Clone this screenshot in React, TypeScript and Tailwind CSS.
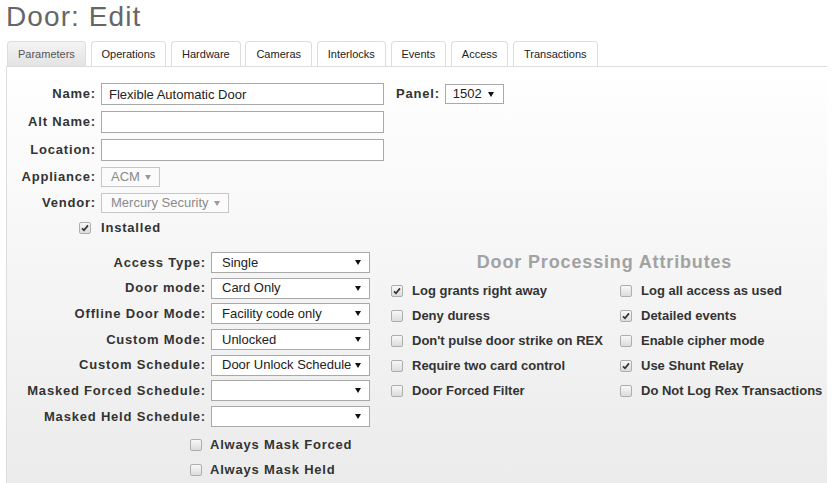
import React from 'react';

const tabs = ['Parameters', 'Operations', 'Hardware', 'Cameras', 'Interlocks', 'Events', 'Access', 'Transactions'];

const scheduleRows: [string, string][] = [
  ['Access Type:', 'Single'],
  ['Door mode:', 'Card Only'],
  ['Offline Door Mode:', 'Facility code only'],
  ['Custom Mode:', 'Unlocked'],
  ['Custom Schedule:', 'Door Unlock Schedule'],
  ['Masked Forced Schedule:', ''],
  ['Masked Held Schedule:', ''],
];

const attributes: [string, boolean][] = [
  ['Log grants right away', true],
  ['Log all access as used', false],
  ['Deny duress', false],
  ['Detailed events', true],
  ["Don't pulse door strike on REX", false],
  ['Enable cipher mode', false],
  ['Require two card control', false],
  ['Use Shunt Relay', true],
  ['Door Forced Filter', false],
  ['Do Not Log Rex Transactions', false],
];

const labelCls = 'text-[13px] font-bold tracking-[0.8px] text-[#333] whitespace-nowrap';

function Arrow({ muted }: { muted?: boolean }) {
  return (
    <svg width="6" height="5" viewBox="0 0 6 5" className="shrink-0">
      <path d="M0 0H6L3 5Z" fill={muted ? '#9a9a9a' : '#111'} />
    </svg>
  );
}

function Check({ on }: { on?: boolean }) {
  return (
    <span className="flex h-[12px] w-[12px] shrink-0 items-center justify-center rounded-[2px] border border-[#aeaeae] bg-linear-to-b from-[#f8f8f8] to-[#dcdcdc]">
      {on && (
        <svg width="8" height="8" viewBox="0 0 8 8">
          <path d="M1 4.3 3 6.3 7 1.4" fill="none" stroke="#333" strokeWidth="1.7" />
        </svg>
      )}
    </span>
  );
}

function TextField({ value = '' }: { value?: string }) {
  return (
    <input
      type="text"
      defaultValue={value}
      readOnly
      className="ml-[5px] block h-[22px] w-[283px] border border-[#a9a9a9] bg-white pl-[7px] text-[13px] text-[#222] outline-none"
    />
  );
}

export default function App() {
  return (
    <div className="min-h-screen bg-white px-[6px] font-['Liberation_Sans',Arial,sans-serif] text-[#333]">
      {/* Title */}
      <h1 className="h-[34px] text-[28px] leading-[34px] tracking-[1.1px] text-[#666]">Door: Edit</h1>

      {/* Tabs */}
      <div className="mt-[7px] flex items-end gap-[4.7px] border-b border-[#ddd] pl-[1px]">
        {tabs.map((t, i) => (
          <div
            key={t}
            className={
              i === 0
                ? 'flex h-[25px] items-center rounded-t-[4px] border border-b-0 border-[#ddd] bg-linear-to-b from-[#f4f4f4] to-[#e3e3e3] px-[10px] text-[11px] text-[#555]'
                : 'flex h-[25px] items-center rounded-t-[4px] border border-b-0 border-[#ddd] bg-white px-[10px] text-[11px] text-[#222]'
            }
          >
            {t}
          </div>
        ))}
      </div>

      {/* Panel */}
      <div className="border-l border-[#ddd] bg-linear-to-b from-white to-[#eaeaea] pt-[16px] pb-[30px]">
        <div className="flex flex-col gap-[6px]">
          <div className="flex h-[22px] items-center">
            <span className={`${labelCls} w-[89px] text-right`}>Name:</span>
            <TextField value="Flexible Automatic Door" />
            <span className={`${labelCls} ml-[12px]`}>Panel:</span>
            <div className="ml-[5px] flex h-[20px] items-center gap-[6px] border border-[#a9a9a9] bg-white pl-[7px] pr-[9px] text-[13px] text-[#222]">
              1502
              <Arrow />
            </div>
          </div>
          <div className="flex h-[22px] items-center">
            <span className={`${labelCls} w-[89px] text-right`}>Alt Name:</span>
            <TextField />
          </div>
          <div className="flex h-[22px] items-center">
            <span className={`${labelCls} w-[89px] text-right`}>Location:</span>
            <TextField />
          </div>
          <div className="flex h-[20px] items-center">
            <span className={`${labelCls} w-[89px] text-right`}>Appliance:</span>
            <div className="ml-[5px] flex h-[20px] items-center gap-[5px] border border-[#c6c6c6] bg-[#fbfbfb] pl-[9px] pr-[8px] text-[13px] text-[#8a8a8a]">
              ACM
              <Arrow muted />
            </div>
          </div>
          <div className="flex h-[20px] items-center">
            <span className={`${labelCls} w-[89px] text-right`}>Vendor:</span>
            <div className="ml-[5px] flex h-[20px] items-center gap-[5px] border border-[#c6c6c6] bg-[#fbfbfb] pl-[9px] pr-[8px] text-[13px] text-[#8a8a8a]">
              Mercury Security
              <Arrow muted />
            </div>
          </div>
          <div className="flex h-[18px] items-center pl-[72px]">
            <Check on />
            <span className={`${labelCls} ml-[10px]`}>Installed</span>
          </div>
        </div>

        {/* Lower section */}
        <div className="mt-[15px] flex">
          <div className="w-[378px] shrink-0">
            <div className="flex flex-col gap-[4.67px]">
              {scheduleRows.map(([label, value]) => (
                <div key={label} className="flex h-[21px] items-center">
                  <span className={`${labelCls} w-[199px] text-right`}>{label}</span>
                  <div className="ml-[5px] flex h-[21px] w-[159px] items-center justify-between border border-[#a9a9a9] bg-white pl-[10px] pr-[8px] text-[13px] text-[#222]">
                    <span className="whitespace-nowrap">{value}</span>
                    <Arrow />
                  </div>
                </div>
              ))}
            </div>
            <div className="mt-[5.5px] flex flex-col pl-[183px]">
              <div className="flex h-[25px] items-center">
                <Check />
                <span className={`${labelCls} ml-[8px]`}>Always Mask Forced</span>
              </div>
              <div className="flex h-[25px] items-center">
                <Check />
                <span className={`${labelCls} ml-[8px]`}>Always Mask Held</span>
              </div>
            </div>
          </div>

          <div className="w-[439px] shrink-0">
            <h2 className="h-[20px] text-center text-[18px] font-bold leading-[20px] tracking-[0.85px] text-[#a2a2a2]">
              Door Processing Attributes
            </h2>
            <div className="mt-[6px] grid grid-cols-[229px_1fr] pl-[6px]">
              {attributes.map(([text, on]) => (
                <div key={text} className="flex h-[25px] items-center">
                  <Check on={on} />
                  <span className="ml-[9px] whitespace-nowrap text-[13px] font-bold text-[#333]">{text}</span>
                </div>
              ))}
            </div>
          </div>
        </div>
      </div>
    </div>
  );
}
